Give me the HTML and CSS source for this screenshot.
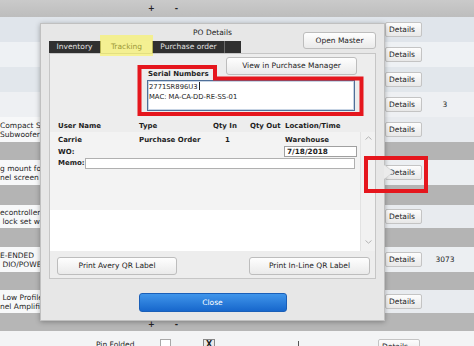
FILE: index.html
```html
<!DOCTYPE html>
<html>
<head>
<meta charset="utf-8">
<title>PO Details</title>
<link rel="stylesheet" href="styles.css">
</head>
<body>
<div class="plusbar"><span class="pm plus">+</span><span class="pm">-</span></div>
<div class="row r1"><div class="desc"></div><div class="det">Details</div><div class="qty"></div></div>
<div class="row r2"><div class="desc"></div><div class="det">Details</div><div class="qty"></div></div>
<div class="row r3"><div class="desc"></div><div class="det">Details</div><div class="qty"></div></div>
<div class="row r4"><div class="desc"></div><div class="det">Details</div><div class="qty">3</div></div>
<div class="row r5"><div class="desc txt"><span>Compact S</span><span>Subwoofer</span></div><div class="det">Details</div><div class="qty"></div></div>
<div class="sep s18"></div>
<div class="row r6"><div class="desc txt"><span>g mount fo</span><span>nel screen</span></div><div class="det">Details</div><div class="qty"></div></div>
<div class="sep s20"></div>
<div class="row r7 h23"><div class="desc txt"><span>econtroller</span><span> lock set w</span></div><div class="det">Details</div><div class="qty"></div></div>
<div class="sep s19"></div>
<div class="row r8"><div class="desc txt"><span>E-ENDED</span><span> DIO/POWE</span></div><div class="det">Details</div><div class="qty">3073</div></div>
<div class="sep s18"></div>
<div class="row r9 h23"><div class="desc txt"><span> Low Profile</span><span>nel Amplifi</span></div><div class="det">Details</div><div class="qty"></div></div>
<div class="plusbar bottom"><span class="pm plus">+</span><span class="pm">-</span></div>
<div class="lastrow">
  <span></span>
  <span class="ltext">Pin Folded</span>
  <span class="chk"></span>
  <span class="xbox">X</span>
  <span class="vbar"></span>
  <span class="det ldet">Details</span>
</div>

<div class="modal">
  <div class="title">PO Details</div>
  <div class="tabrow">
    <div class="tabs">
      <div class="tab">Inventory</div>
      <div class="tab sel">Tracking</div>
      <div class="tab po">Purchase order</div>
      <div class="tab fill"></div>
    </div>
    <div class="btn open">Open Master</div>
  </div>
  <div class="panel">
    <div class="pmrow"><div class="btn viewpm">View in Purchase Manager</div></div>
    <div class="serial">
      <div class="serial-label">Serial Numbers</div>
      <div class="serial-box">
        <div>2771SR896U3<span class="caret"></span></div>
        <div>MAC: MA-CA-DD-RE-SS-01</div>
      </div>
    </div>
    <div class="thead">
      <span>User Name</span><span>Type</span><span>Qty In</span><span>Qty Out</span><span>Location/Time</span>
    </div>
    <div class="list">
      <div class="list-main">
        <div class="rec">
          <div class="trow">
            <span>Carrie</span><span>Purchase Order</span><span class="qin">1</span><span></span><span>Warehouse</span>
          </div>
          <div class="trow">
            <span>WO:</span><span></span><span></span><span></span><span class="date">7/18/2018</span>
          </div>
          <div class="memo"><span class="memo-label">Memo:</span><span class="memo-input"></span></div>
        </div>
      </div>
      <div class="sb">
        <svg width="7" height="4" viewBox="0 0 7 4"><path d="M0.5 3.5 L3.5 0.8 L6.5 3.5" fill="none" stroke="#b4b4b4" stroke-width="1"/></svg>
        <svg width="7" height="4" viewBox="0 0 7 4"><path d="M0.5 0.5 L3.5 3.2 L6.5 0.5" fill="none" stroke="#b4b4b4" stroke-width="1"/></svg>
      </div>
    </div>
    <div class="prow">
      <div class="btn print">Print Avery QR Label</div>
      <div class="btn print inline">Print In-Line QR Label</div>
    </div>
  </div>
  <div class="close">Close</div>
  <div class="arrow"></div>
</div>

<div class="highlight"></div>
<svg class="marks" width="474" height="346" viewBox="0 0 474 346">
  <path d="M139.5 67 H215 V78.5 H361.5 V114 H139.5 Z" fill="none" stroke="#e5161d" stroke-width="4"/>
  <rect x="366" y="158" width="60" height="33" fill="none" stroke="#e5161d" stroke-width="4"/>
</svg>
</body>
</html>
```

FILE: styles.css
```css
* { box-sizing: border-box; }
html, body { margin: 0; padding: 0; }
body {
  width: 474px;
  height: 346px;
  overflow: hidden;
  position: relative;
  font-family: "DejaVu Sans", Verdana, sans-serif;
  font-size: 7.5px;
  color: #1e1e1e;
  background: #eceff2;
}

/* background list */
.plusbar {
  height: 17px;
  background: linear-gradient(#cacaca, #bdbdbd);
  display: flex;
  align-items: center;
  padding-left: 148px;
  gap: 20px;
  font-weight: bold;
  font-size: 8px;
  color: #222;
}
.plusbar.bottom { height: 18px; padding-top: 4px; background: #b6b6b6; }

.row {
  display: grid;
  grid-template-columns: 385px 37px 46px;
  align-items: center;
  height: 25px;
}
.row.h23 { height: 23px; }
.r1 { background: #e0e5eb; }
.r2 { background: #eef1f4; }
.r3 { background: #e2e7ec; }
.r4 { background: #eef0f3; }
.r5, .r7, .r9 { background: #e8ebef; }
.r6, .r8 { background: #eceff2; }
.sep { background: #b4b4b4; }
.s18 { height: 18px; }
.s19 { height: 19px; }
.s20 { height: 20px; }

.desc {
  align-self: stretch;
  overflow: hidden;
  white-space: pre;
  line-height: 9px;
  display: flex;
  flex-direction: column;
  justify-content: center;
}
.desc.txt { background: #f7f8f9; width: 40px; }

.det {
  height: 15px;
  border: 1px solid #c4c4c4;
  border-radius: 2px;
  background: linear-gradient(#fdfdfd, #e8e8e8);
  line-height: 13px;
  padding-left: 3px;
  color: #222;
}
.qty { text-align: center; }

.lastrow {
  height: 15px;
  background: #f3f4f5;
  display: grid;
  grid-template-columns: 96px 64px 43px 95px 80px 42px;
  align-items: start;
  padding-top: 8px;
  overflow: hidden;
}
.ltext { padding-top: 1px; }
.chk { width: 11px; height: 10px; border: 1px solid #a8a8a8; background: #fff; }
.xbox { width: 12px; height: 10px; border: 1px solid #888; background: #e9e9e9; font-weight: bold; font-size: 8px; text-align: center; line-height: 9px; }
.vbar { width: 1px; height: 8px; margin-top: 2px; background: #555; }

/* modal */
.modal {
  position: absolute;
  left: 40px;
  top: 23px;
  width: 345px;
  height: 298px;
  background: #e7e7e7;
  border: 1px solid #c0c0c0;
  box-shadow: 0 1px 5px rgba(0, 0, 0, 0.3);
  display: flex;
  flex-direction: column;
}
.title {
  height: 17px;
  line-height: 17px;
  text-align: center;
  color: #222;
}
.tabrow {
  display: flex;
  justify-content: space-between;
  align-items: flex-end;
  margin: -9px 8px 0 8px;
  height: 21px;
}
.tabs {
  display: flex;
  height: 12px;
  width: 192px;
  background: #303030;
}
.tab {
  width: 52px;
  text-align: center;
  line-height: 12px;
  color: #e2e2e2;
  border-right: 1px solid #6a6a6a;
}
.tab.sel { background: #e9e9e9; color: #333; }
.tab.po { width: 72px; }
.tab.fill { flex: 1; border-right: 0; }

.btn {
  border: 1px solid #bdbdbd;
  border-radius: 3px;
  background: linear-gradient(#fefefe, #eaeaea);
  text-align: center;
  color: #222;
}
.open { width: 73px; height: 17px; line-height: 15px; margin-bottom: 4px; }

.panel {
  margin: 0 8px;
  height: 226px;
  border: 1px solid #c6c6c6;
  background: #ededed;
  display: flex;
  flex-direction: column;
}
.pmrow {
  display: flex;
  justify-content: flex-end;
  padding-right: 18px;
  margin-top: 3px;
}
.viewpm { width: 131px; height: 18px; line-height: 16px; }

.serial { margin: -5px 20px 0 97px; }
.serial-label {
  height: 10px;
  line-height: 9px;
  font-weight: bold;
  font-size: 7px;
  padding-left: 1px;
}
.serial-box {
  height: 31px;
  border: 1px solid #4f6f98;
  background: #fff;
  padding: 1px 1px;
  font-size: 6.8px;
  line-height: 10px;
  box-shadow: inset 0 0 0 1px #c7d4e4;
}
.caret { display: inline-block; width: 1px; height: 8px; background: #222; vertical-align: -1px; margin-left: 1px; }

.thead, .trow {
  display: grid;
  grid-template-columns: 81px 74px 37px 35px 1fr;
  padding-left: 8px;
  font-weight: bold;
  font-size: 7px;
}
.thead { margin-top: 11px; height: 10px; line-height: 9px; }
.list { height: 119px; display: flex; }
.list-main { flex: 1; background: #fff; }
.rec { background: #f3f3f3; height: 78px; padding-top: 2px; }
.trow { height: 12px; line-height: 12px; }
.qin { padding-left: 12px; }
.date {
  margin-left: -1px;
  width: 73px;
  height: 11px;
  line-height: 9px;
  border: 1px solid #a0a0a0;
  background: #fff;
  padding-left: 2px;
  font-size: 7.3px;
}
.memo { display: flex; height: 11px; padding-left: 8px; font-weight: bold; font-size: 7px; line-height: 11px; }
.memo-label { width: 27px; }
.memo-input { width: 270px; height: 11px; border: 1px solid #b0b0b0; background: #fff; }

.sb {
  width: 15px;
  background: #f1f1f1;
  border-left: 1px solid #e2e2e2;
  display: flex;
  flex-direction: column;
  justify-content: space-between;
  align-items: center;
  padding: 4px 0 7px;
}

.prow {
  display: flex;
  justify-content: space-between;
  margin-top: 6px;
  padding: 0 5px 0 7px;
}
.print { width: 120px; height: 18px; line-height: 16px; }
.print.inline { width: 121px; }

.close {
  align-self: center;
  width: 148px;
  height: 19px;
  margin-top: 14px;
  border-radius: 3px;
  background: linear-gradient(#4095ea, #1767cc);
  border: 1px solid #1a5fb8;
  color: #fff;
  text-align: center;
  line-height: 17px;
}
.arrow {
  position: absolute;
  left: 100%;
  top: 141px;
  width: 0;
  height: 0;
  border-left: 9px solid #ebebeb;
  border-top: 7px solid transparent;
  border-bottom: 7px solid transparent;
  filter: drop-shadow(1px 0 0 #d0d0d0);
}

/* annotations */
.highlight {
  position: absolute;
  left: 100px;
  top: 35px;
  width: 53px;
  height: 21px;
  background: rgba(255, 248, 60, 0.5);
}
.marks { position: absolute; left: 0; top: 0; pointer-events: none; }
```
